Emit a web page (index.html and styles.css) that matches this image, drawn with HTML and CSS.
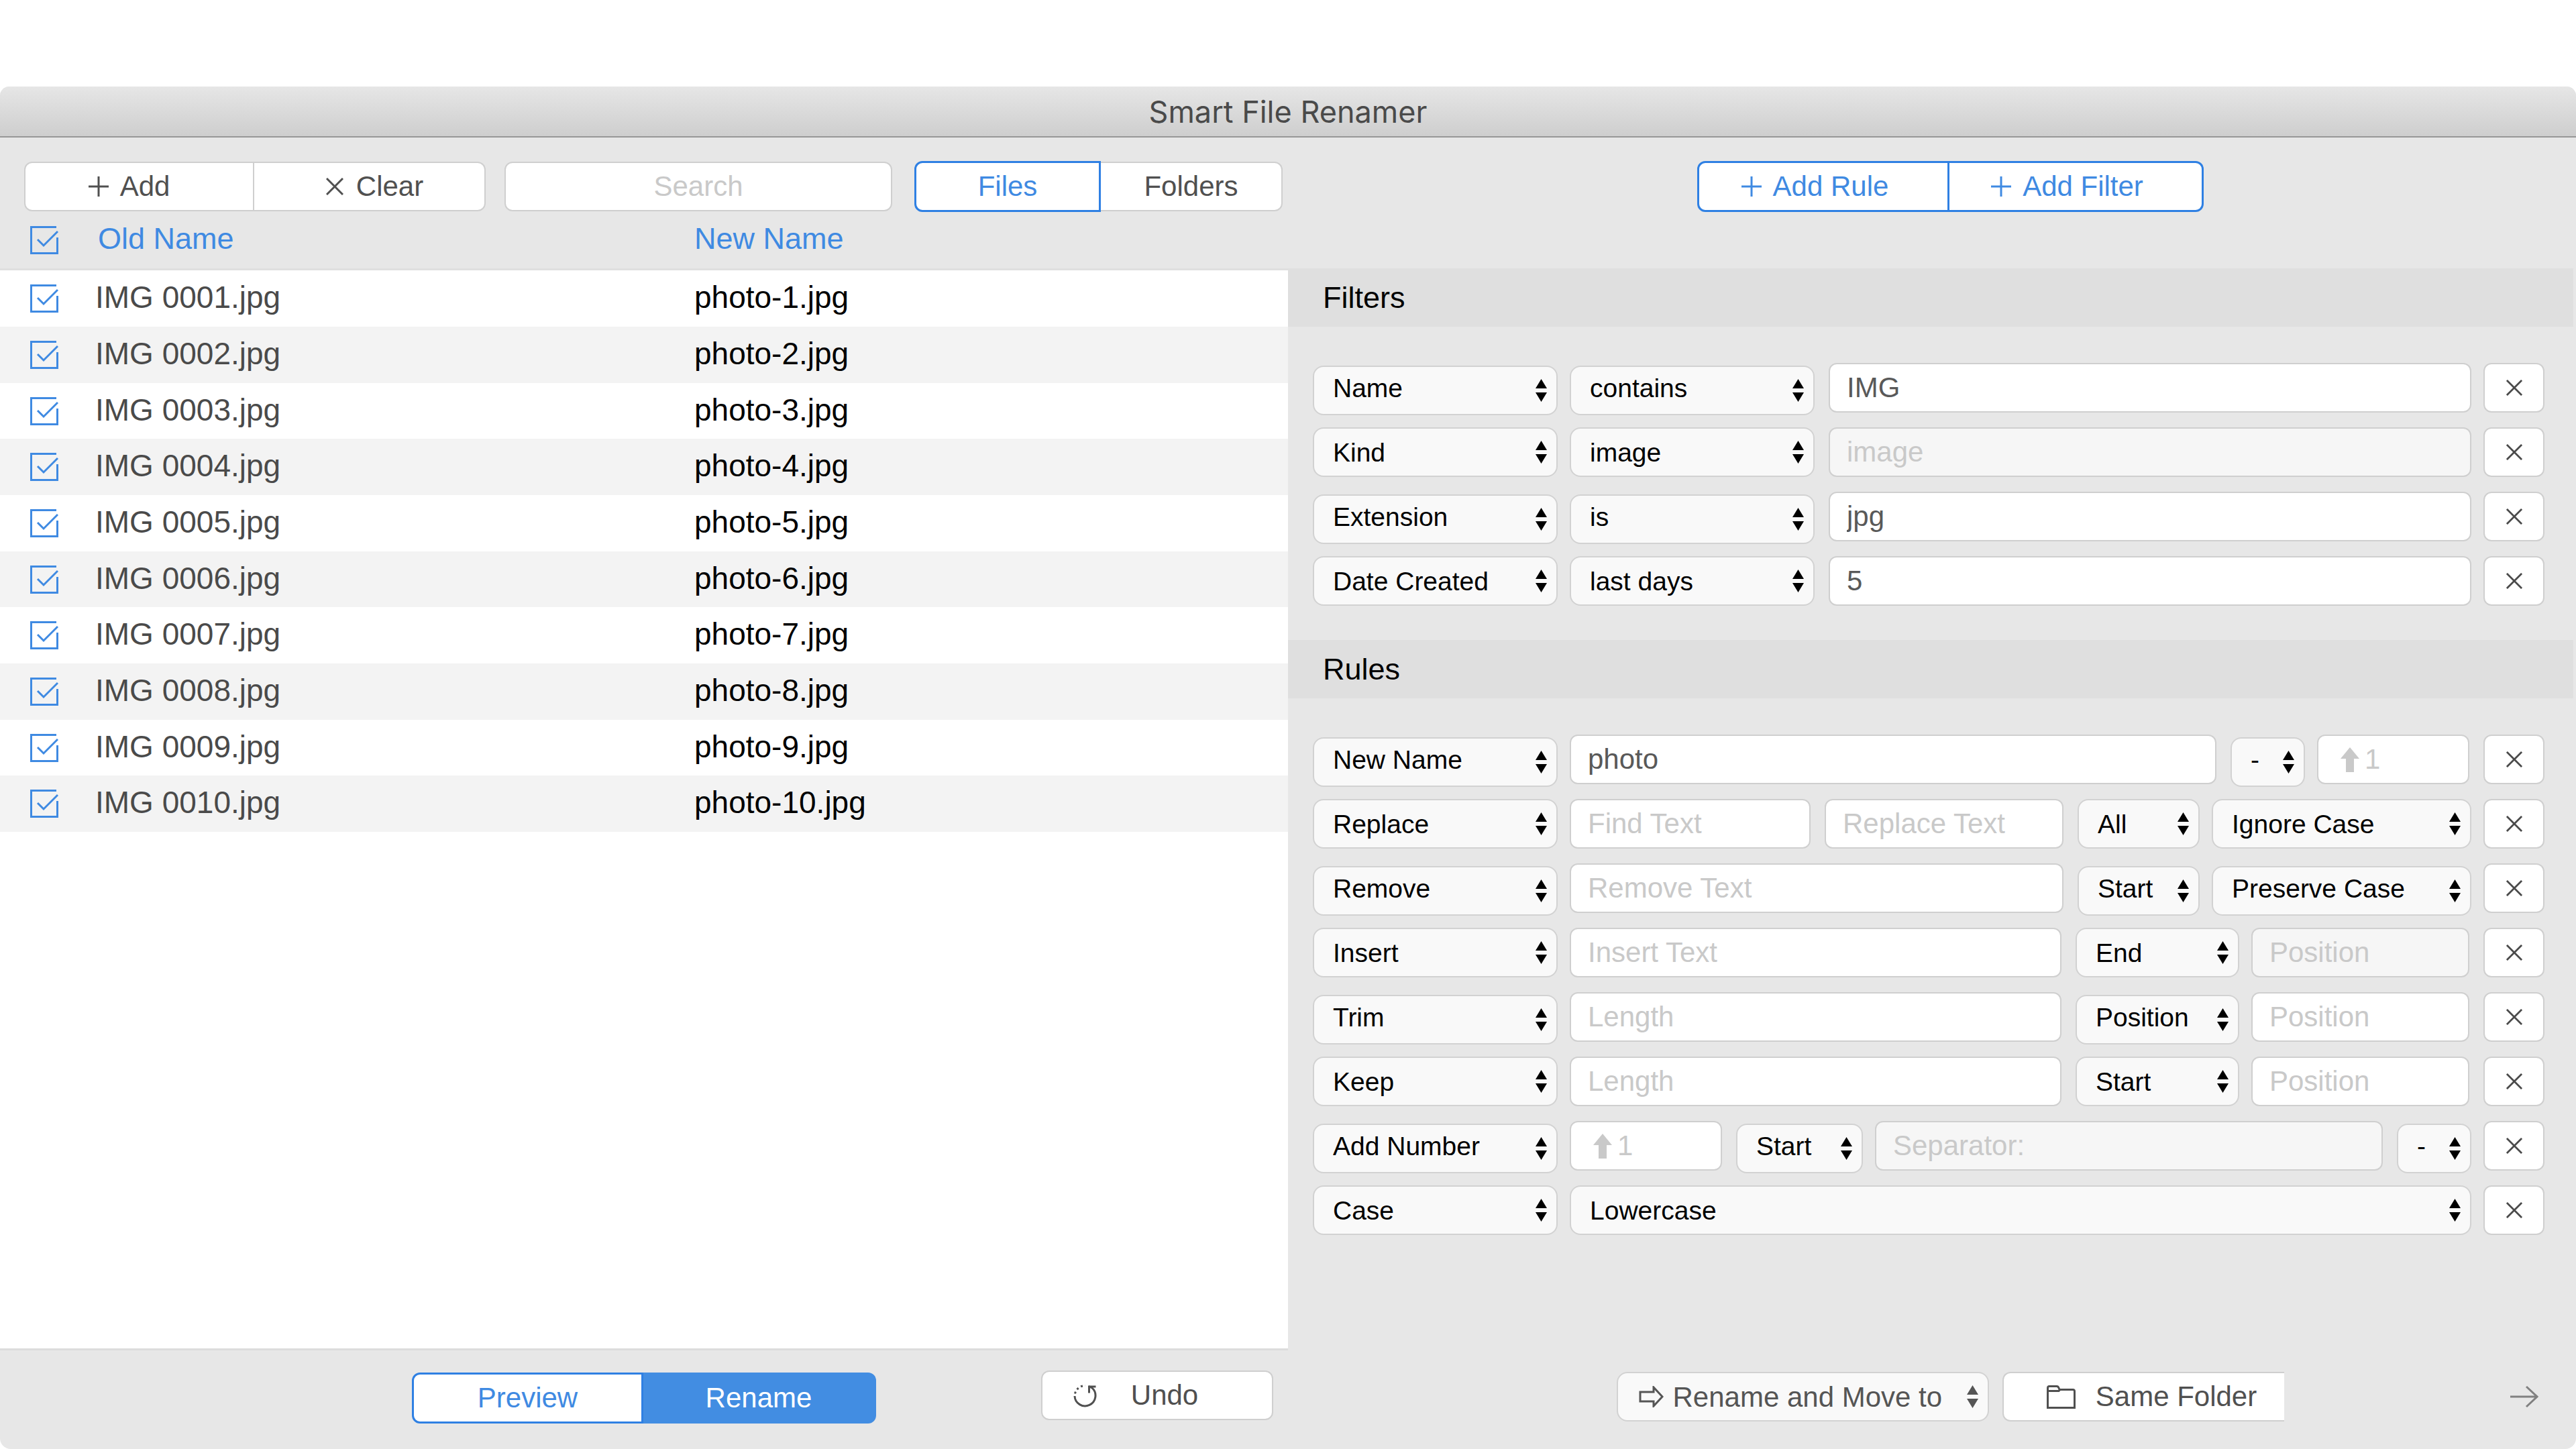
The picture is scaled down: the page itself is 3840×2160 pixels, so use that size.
FILE: index.html
```html
<!DOCTYPE html>
<html lang="en">
<head>
<meta charset="utf-8">
<title>Smart File Renamer</title>
<link rel="stylesheet" href="styles.css">
</head>
<body>
<svg class="sprite" aria-hidden="true">
  <symbol id="i-plus" viewBox="0 0 30 30"><path d="M15 0V30M0 15H30"/></symbol>
  <symbol id="i-close" viewBox="0 0 26 26"><path d="M1 1L25 25M25 1L1 25"/></symbol>
  <symbol id="i-up" viewBox="0 0 28 37"><path d="M14 0L28 17H20V37H8V17H0Z"/></symbol>
</svg>
<div class="window">
  <header class="titlebar"><h1>Smart File Renamer</h1></header>
  <div class="panes">
    <section class="pane">
      <div class="toolbar toolbar-files">
        <div class="group">
          <button class="btn btn-add"><svg class="icon"><use href="#i-plus"/></svg>Add</button>
          <button class="btn btn-clear"><svg class="icon icon-close"><use href="#i-close"/></svg>Clear</button>
        </div>
        <input class="field search" type="text" placeholder="Search" aria-label="Search">
        <div class="group">
          <button class="btn btn-files blue">Files</button>
          <button class="btn btn-folders">Folders</button>
        </div>
      </div>
      <div class="list">
        <table>
          <thead>
            <tr><th class="tick"><input type="checkbox" checked aria-label="Select all"></th><th class="old">Old Name</th><th>New Name</th></tr>
          </thead>
          <tbody>
            <tr><td class="tick"><input type="checkbox" checked aria-label="IMG 0001.jpg"></td><td class="old">IMG 0001.jpg</td><td>photo-1.jpg</td></tr>
            <tr><td class="tick"><input type="checkbox" checked aria-label="IMG 0002.jpg"></td><td class="old">IMG 0002.jpg</td><td>photo-2.jpg</td></tr>
            <tr><td class="tick"><input type="checkbox" checked aria-label="IMG 0003.jpg"></td><td class="old">IMG 0003.jpg</td><td>photo-3.jpg</td></tr>
            <tr><td class="tick"><input type="checkbox" checked aria-label="IMG 0004.jpg"></td><td class="old">IMG 0004.jpg</td><td>photo-4.jpg</td></tr>
            <tr><td class="tick"><input type="checkbox" checked aria-label="IMG 0005.jpg"></td><td class="old">IMG 0005.jpg</td><td>photo-5.jpg</td></tr>
            <tr><td class="tick"><input type="checkbox" checked aria-label="IMG 0006.jpg"></td><td class="old">IMG 0006.jpg</td><td>photo-6.jpg</td></tr>
            <tr><td class="tick"><input type="checkbox" checked aria-label="IMG 0007.jpg"></td><td class="old">IMG 0007.jpg</td><td>photo-7.jpg</td></tr>
            <tr><td class="tick"><input type="checkbox" checked aria-label="IMG 0008.jpg"></td><td class="old">IMG 0008.jpg</td><td>photo-8.jpg</td></tr>
            <tr><td class="tick"><input type="checkbox" checked aria-label="IMG 0009.jpg"></td><td class="old">IMG 0009.jpg</td><td>photo-9.jpg</td></tr>
            <tr><td class="tick"><input type="checkbox" checked aria-label="IMG 0010.jpg"></td><td class="old">IMG 0010.jpg</td><td>photo-10.jpg</td></tr>
          </tbody>
        </table>
      </div>
      <footer class="footer footer-files">
        <div class="group run">
          <button class="btn btn-preview blue">Preview</button>
          <button class="btn btn-rename blue filled">Rename</button>
        </div>
        <button class="btn btn-undo"><svg class="undo-icon" viewBox="0 0 36 36"><path d="M2 19A15.500 15.500 0 1 0 28 7L23 4.500"/><path class="dots" d="M2.500 15.500A15.500 15.500 0 0 1 18 3.500"/><path d="M33.500 5H23.500V14.500"/></svg>Undo</button>
      </footer>
    </section>

    <section class="pane">
      <div class="toolbar toolbar-rules">
        <div class="group">
          <button class="btn btn-rule blue"><svg class="icon"><use href="#i-plus"/></svg>Add Rule</button>
          <button class="btn btn-filter blue"><svg class="icon"><use href="#i-plus"/></svg>Add Filter</button>
        </div>
      </div>
      <div class="settings">
        <h2>Filters</h2>
        <div class="rows filters">
          <div class="row">
            <select class="kind" aria-label="Filter by"><option>Name</option></select>
            <select class="kind" aria-label="Condition"><option>contains</option></select>
            <input class="field grow" type="text" value="IMG" aria-label="Filter value">
            <button class="remove" aria-label="Remove"><svg><use href="#i-close"/></svg></button>
          </div>
          <div class="row">
            <select class="kind" aria-label="Filter by"><option>Kind</option></select>
            <select class="kind" aria-label="Condition"><option>image</option></select>
            <input class="field grow" type="text" placeholder="image" disabled aria-label="Filter value">
            <button class="remove" aria-label="Remove"><svg><use href="#i-close"/></svg></button>
          </div>
          <div class="row">
            <select class="kind" aria-label="Filter by"><option>Extension</option></select>
            <select class="kind" aria-label="Condition"><option>is</option></select>
            <input class="field grow" type="text" value="jpg" aria-label="Filter value">
            <button class="remove" aria-label="Remove"><svg><use href="#i-close"/></svg></button>
          </div>
          <div class="row">
            <select class="kind" aria-label="Filter by"><option>Date Created</option></select>
            <select class="kind" aria-label="Condition"><option>last days</option></select>
            <input class="field grow" type="text" value="5" aria-label="Filter value">
            <button class="remove" aria-label="Remove"><svg><use href="#i-close"/></svg></button>
          </div>
        </div>
        <h2>Rules</h2>
        <div class="rows rules">
          <div class="row">
            <select class="kind" aria-label="Rule"><option>New Name</option></select>
            <input class="field grow" type="text" value="photo" aria-label="New name">
            <select class="mark" aria-label="Separator"><option>-</option></select>
            <label class="field number"><svg><use href="#i-up"/></svg><input type="text" placeholder="1" aria-label="Start number"></label>
            <button class="remove" aria-label="Remove"><svg><use href="#i-close"/></svg></button>
          </div>
          <div class="row">
            <select class="kind" aria-label="Rule"><option>Replace</option></select>
            <input class="field find" type="text" placeholder="Find Text" aria-label="Find text">
            <input class="field grow" type="text" placeholder="Replace Text" aria-label="Replace text">
            <select class="where" aria-label="Occurrences"><option>All</option></select>
            <select class="case" aria-label="Case matching"><option>Ignore Case</option></select>
            <button class="remove" aria-label="Remove"><svg><use href="#i-close"/></svg></button>
          </div>
          <div class="row">
            <select class="kind" aria-label="Rule"><option>Remove</option></select>
            <input class="field grow" type="text" placeholder="Remove Text" aria-label="Remove text">
            <select class="where" aria-label="Where"><option>Start</option></select>
            <select class="case" aria-label="Case matching"><option>Preserve Case</option></select>
            <button class="remove" aria-label="Remove"><svg><use href="#i-close"/></svg></button>
          </div>
          <div class="row">
            <select class="kind" aria-label="Rule"><option>Insert</option></select>
            <input class="field grow" type="text" placeholder="Insert Text" aria-label="Insert text">
            <select class="place" aria-label="Where"><option>End</option></select>
            <input class="field position" type="text" placeholder="Position" disabled aria-label="Position">
            <button class="remove" aria-label="Remove"><svg><use href="#i-close"/></svg></button>
          </div>
          <div class="row">
            <select class="kind" aria-label="Rule"><option>Trim</option></select>
            <input class="field grow" type="text" placeholder="Length" aria-label="Length">
            <select class="place" aria-label="Where"><option>Position</option></select>
            <input class="field position" type="text" placeholder="Position" aria-label="Position">
            <button class="remove" aria-label="Remove"><svg><use href="#i-close"/></svg></button>
          </div>
          <div class="row">
            <select class="kind" aria-label="Rule"><option>Keep</option></select>
            <input class="field grow" type="text" placeholder="Length" aria-label="Length">
            <select class="place" aria-label="Where"><option>Start</option></select>
            <input class="field position" type="text" placeholder="Position" aria-label="Position">
            <button class="remove" aria-label="Remove"><svg><use href="#i-close"/></svg></button>
          </div>
          <div class="row">
            <select class="kind" aria-label="Rule"><option>Add Number</option></select>
            <label class="field number"><svg><use href="#i-up"/></svg><input type="text" placeholder="1" aria-label="Start number"></label>
            <select class="end" aria-label="Where"><option>Start</option></select>
            <input class="field grow" type="text" placeholder="Separator:" disabled aria-label="Separator text">
            <select class="mark" aria-label="Separator"><option>-</option></select>
            <button class="remove" aria-label="Remove"><svg><use href="#i-close"/></svg></button>
          </div>
          <div class="row">
            <select class="kind" aria-label="Rule"><option>Case</option></select>
            <select class="grow" aria-label="Letter case"><option>Lowercase</option></select>
            <button class="remove" aria-label="Remove"><svg><use href="#i-close"/></svg></button>
          </div>
        </div>
      </div>
      <footer class="footer footer-rules">
        <div class="target">
          <label class="action"><svg viewBox="0 0 37 32"><path d="M2 9H22V2L35 16L22 30V23H2Z"/></svg><select aria-label="Action"><option>Rename and Move to</option></select></label>
          <button class="btn btn-folder"><svg viewBox="0 0 43 35"><path d="M1.500 33.500V4Q1.500 1.500 4 1.500H15Q17 1.500 18 4L19 6.500H39Q41.500 6.500 41.500 9V33.500ZM1.500 8.500H18L20 6.500"/></svg>Same Folder</button>
        </div>
        <button class="next" aria-label="Next"><svg viewBox="0 0 42 34"><path d="M0 17H40M24 2L40 17L24 32"/></svg></button>
      </footer>
    </section>
  </div>
</div>
</body>
</html>
```
FILE: styles.css
```css
* { box-sizing: border-box; }

body {
  margin: 0;
  min-height: 100vh;
  padding-top: 129px;
  display: flex;
  flex-direction: column;
  background: #fff;
  color: #4d4d4d;
  font-family: "Liberation Sans", Arial, sans-serif;
  font-size: 42px;
}

button, input, select { font: inherit; color: inherit; margin: 0; }
svg { display: block; flex: none; fill: none; stroke: currentColor; stroke-width: 3; }
.sprite { position: absolute; width: 0; height: 0; }

.window {
  flex: 1;
  display: flex;
  flex-direction: column;
  border-radius: 14px 14px 16px 16px;
  background: #e7e7e7;
  overflow: hidden;
}

.titlebar {
  height: 76px;
  padding-top: 2px;
  display: flex;
  align-items: center;
  justify-content: center;
  background: linear-gradient(#e6e6e6, #cecece);
  border-bottom: 2px solid #979797;
}
.titlebar h1 { margin: 0; font: 400 45px/60px Inter, sans-serif; color: #4a4a4a; }

.panes { flex: 1; display: grid; grid-template-columns: 1fr 1fr; }
.pane { display: flex; flex-direction: column; min-width: 0; }

/* Toolbars */
.toolbar { display: flex; align-items: center; height: 111px; padding-top: 35px; }
.toolbar-files { padding-left: 36px; padding-right: 8px; }
.toolbar-files .search { flex: 1; min-width: 0; margin: 0 33px 0 28px; padding: 0; text-align: center; }
.toolbar-rules { justify-content: center; padding-left: 54px; }

.group { display: flex; align-items: center; }
.btn {
  height: 74px;
  padding: 0;
  display: flex;
  align-items: center;
  justify-content: center;
  gap: 17px;
  background: #fff;
  border: 2px solid #cfcfcf;
  border-radius: 12px;
  color: #505050;
}
.btn.blue { height: 76px; border: 3px solid #2f80e3; color: #3f8ae2; }
.group .btn:first-child { border-top-right-radius: 0; border-bottom-right-radius: 0; }
.group .btn:last-child { border-top-left-radius: 0; border-bottom-left-radius: 0; border-left: 0; }
.btn.filled { background: #428de2; border-color: #428de2; color: #fff; }
.icon { width: 30px; height: 30px; }
.icon-close { width: 26px; height: 26px; }
.btn-add { width: 343px; padding-right: 30px; }
.btn-clear { width: 345px; padding-left: 16px; gap: 19px; }
.btn-files { width: 278px; }
.btn-folders { width: 271px; }
.btn-rule { width: 376px; padding-right: 24px; }
.btn-filter { width: 379px; padding-right: 24px; }

/* File list */
.list { flex: 1; background: #fff; border-bottom: 3px solid #dcdcdc; }
table { width: 100%; border-spacing: 0; table-layout: fixed; font-size: 46px; line-height: 52px; color: #000; }
th, td { padding: 0 0 4px; text-align: left; font-weight: 400; }
th { height: 87px; background: #e7e7e7; border-bottom: 3px solid #dfdfdf; font-size: 45px; color: #3f8ae2; }
td { height: 84px; }
tbody tr:nth-child(3n) td { height: 83px; }
tbody tr:nth-child(even) { background: #f3f3f3; }
th.tick, td.tick { width: 142px; padding: 0 0 0 45px; }
th.old, td.old { width: 893px; }
th.old { padding-left: 4px; }
td.old { color: #4a4a4a; }
.tick input {
  appearance: none;
  display: block;
  width: 42px;
  height: 42px;
  background: url("data:image/svg+xml,%3Csvg xmlns='http://www.w3.org/2000/svg' viewBox='0 0 42 42' fill='none' stroke='%233f8ae2' stroke-width='3'%3E%3Cpath d='M39 1.500H1.500V40.500H40.500V17'/%3E%3Cpath d='M11 20L20 29L41 8'/%3E%3C/svg%3E") center / 42px no-repeat;
}

/* Filters and rules */
.settings { flex: 1; padding-top: 84px; }
h2 {
  margin: 0 4px 0 0;
  padding: 0 0 0 52px;
  height: 87px;
  font-size: 45px;
  line-height: 87px;
  font-weight: 400;
  color: #000;
  background: #dfdfdf;
}
.rows { display: flex; flex-direction: column; gap: 18px; padding: 54px 47px 47px 37px; }
.row { display: flex; align-items: flex-start; gap: 18px; height: 78px; }
.row .grow { flex: 1; min-width: 0; }

.field {
  height: 74px;
  padding: 0 25px;
  background: #fff;
  border: 2px solid #cfcfcf;
  border-radius: 12px;
  color: #595959;
}
.field:disabled { background: #f6f6f6; }
::placeholder { color: #c9c9c9; opacity: 1; }
.number { width: 227px; display: flex; align-items: center; gap: 8px; padding-left: 33px; color: #c9c9c9; }
.number svg { width: 28px; height: 37px; fill: currentColor; stroke: none; }
.number input { flex: 1; min-width: 0; padding: 0; border: 0; background: none; }
.find { width: 359px; }
.position { width: 325px; }

select {
  appearance: none;
  height: 74px;
  padding: 0 36px 0 28px;
  font-size: 39px;
  color: #000;
  border: 2px solid #d2d2d2;
  border-radius: 16px;
  background: #f9f9f9 url("data:image/svg+xml,%3Csvg xmlns='http://www.w3.org/2000/svg' viewBox='0 0 17 34'%3E%3Cpath d='M8.500 0L17 14H0ZM0 20H17L8.500 34Z'/%3E%3C/svg%3E") right 14px center / 17px 34px no-repeat;
}
.kind { width: 365px; }
.mark { width: 111px; }
.where { width: 182px; }
.end { width: 189px; }
.place { width: 244px; }
.case { width: 387px; }
.row:nth-child(odd) select { align-self: flex-end; padding-bottom: 8px; }
.filters .field { margin-left: 3px; }
.rules .field + * { margin-left: 3px; }

.remove {
  width: 91px;
  height: 74px;
  padding: 0;
  display: flex;
  align-items: center;
  justify-content: center;
  background: #fff;
  border: 2px solid #cfcfcf;
  border-radius: 12px;
  color: #4a4a4a;
}
.remove svg { width: 24px; height: 24px; }

/* Footers */
.footer { display: grid; grid-template-columns: 1fr auto 1fr; align-items: center; height: 147px; padding-bottom: 6px; }
.run { grid-column: 2; }
.btn-preview { width: 345px; border-right: 0; }
.btn-rename { width: 347px; }
.btn-undo { justify-self: end; width: 346px; margin: 0 22px 8px 0; padding-right: 64px; gap: 50px; }
.undo-icon { width: 36px; height: 36px; }
.undo-icon .dots { stroke-dasharray: 3 4; }

.footer-rules { height: 150px; padding-left: 54px; }
.target { grid-column: 2; display: flex; gap: 20px; }
.action {
  width: 555px;
  height: 74px;
  padding-left: 31px;
  display: flex;
  align-items: center;
  gap: 14px;
  background: #f9f9f9;
  border: 2px solid #d2d2d2;
  border-radius: 16px;
  color: #555;
}
.action svg { width: 37px; height: 32px; }
.action select {
  flex: 1;
  min-width: 0;
  height: 70px;
  padding: 0;
  border: 0;
  font-size: 42px;
  color: #555;
  background-color: transparent;
  background-image: url("data:image/svg+xml,%3Csvg xmlns='http://www.w3.org/2000/svg' viewBox='0 0 17 34' fill='%23555'%3E%3Cpath d='M8.500 0L17 14H0ZM0 20H17L8.500 34Z'/%3E%3C/svg%3E");
}
.btn-folder { width: 420px; gap: 30px; padding-left: 24px; border-right: 0; border-radius: 12px 0 0 12px; }
.btn-folder svg { width: 43px; height: 35px; }
.next { justify-self: end; margin-right: 56px; padding: 0; border: 0; background: none; color: #808080; }
.next svg { width: 42px; height: 34px; }
```
